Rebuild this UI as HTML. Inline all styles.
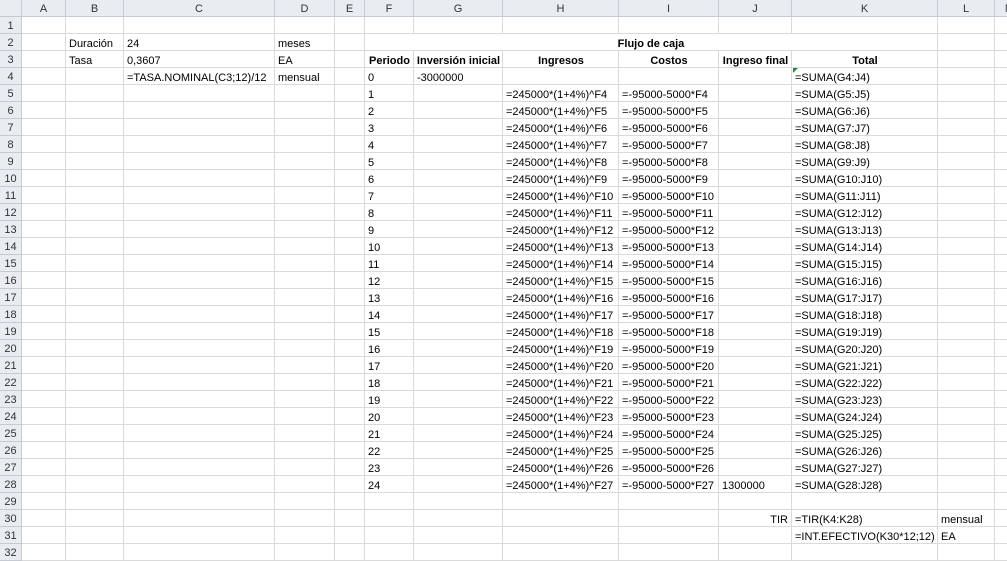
<!DOCTYPE html>
<html><head><meta charset="utf-8"><style>
*{margin:0;padding:0;box-sizing:border-box}
body{width:1007px;height:553px;overflow:hidden;background:#fff;font-family:"Liberation Sans",Arial,sans-serif;font-size:11px;color:#000;position:relative}
.c{position:absolute;height:17px;line-height:16px;border-right:1px solid #dadada;border-bottom:1px solid #dadada;white-space:nowrap;overflow:visible;padding-left:3px}
.t{padding-top:2px}
.h{background:#e9edf2;color:#333;text-align:center;padding:0;padding-top:1px;border-right:1px solid #c5cbd3;border-bottom:1px solid #c5cbd3;font-size:11px}
.b{font-weight:bold;text-align:center;padding-left:0}
.r{text-align:right;padding-right:4px}
</style></head><body>
<div id="g"></div>
<script>
var cols=[["",0,22],["A",22,44],["B",66,58],["C",124,151],["D",275,60],["E",335,30],["F",365,49],["G",414,89],["H",503,116],["I",619,100],["J",719,73],["K",792,146],["L",938,57],["M",995,30]];
var h="";
for(var i=0;i<cols.length;i++){h+='<div class="c h" style="top:0;left:'+cols[i][1]+'px;width:'+cols[i][2]+'px">'+cols[i][0]+'</div>';}
function L(c){for(var i=0;i<cols.length;i++)if(cols[i][0]==c)return cols[i];}
for(var r=1;r<=32;r++){var t=17*r;
 h+='<div class="c h" style="top:'+t+'px;left:0;width:22px">'+r+'</div>';
 for(var i=1;i<cols.length;i++){
  if(r==2&&i>=6&&i<=11){continue;}
  h+='<div class="c" style="top:'+t+'px;left:'+cols[i][1]+'px;width:'+cols[i][2]+'px"></div>';}
 if(r==2)h+='<div class="c b t" style="top:34px;left:365px;width:573px">Flujo de caja</div>';
}
function T(c,r,s,cls){var k=L(c);h+='<div class="c t '+(cls||'')+'" style="border:none;top:'+(17*r)+'px;left:'+k[1]+'px;width:'+k[2]+'px">'+s+'</div>';}
T("B",2,"Duración");T("C",2,"24");T("D",2,"meses");
T("B",3,"Tasa");T("C",3,"0,3607");T("D",3,"EA");
T("C",4,"=TASA.NOMINAL(C3;12)/12");T("D",4,"mensual");
T("F",3,"Periodo","b");T("G",3,"Inversión inicial","b");T("H",3,"Ingresos","b");T("I",3,"Costos","b");T("J",3,"Ingreso final","b");T("K",3,"Total","b");
T("F",4,"0");T("G",4,"-3000000");T("K",4,"=SUMA(G4:J4)");
h+='<div style="position:absolute;left:793px;top:68px;width:0;height:0;border-top:5px solid #1e8c3a;border-right:5px solid transparent"></div>';
for(var r=5;r<=28;r++){T("F",r,""+(r-4));T("H",r,"=245000*(1+4%)^F"+(r-1));T("I",r,"=-95000-5000*F"+(r-1));T("K",r,"=SUMA(G"+r+":J"+r+")");}
T("J",28,"1300000");
T("J",30,"TIR","r");T("K",30,"=TIR(K4:K28)");T("L",30,"mensual");
T("K",31,"=INT.EFECTIVO(K30*12;12)");T("L",31,"EA");
document.getElementById("g").innerHTML=h;
</script>
</body></html>
